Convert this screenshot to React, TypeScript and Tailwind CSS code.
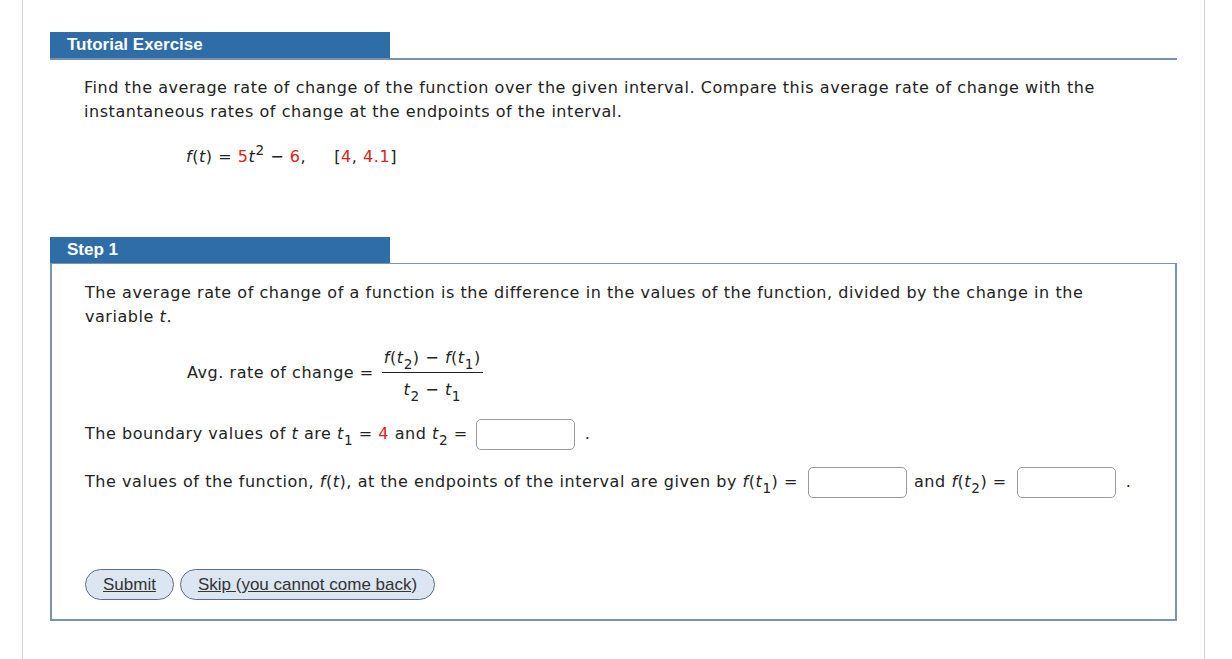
import React from 'react'

const red = 'text-[#e0201b]'

function Sub({ children }: { children: React.ReactNode }) {
  return <span className="text-[0.85em] relative top-[0.42em] leading-none">{children}</span>
}

function T({ children }: { children: React.ReactNode }) {
  return <i className="italic">{children}</i>
}

function Box() {
  return (
    <span className="inline-block align-middle w-[99px] h-[31px] border border-[#9a9a9a] rounded-[5px] bg-white mx-[2px]" />
  )
}

function Header({ title }: { title: string }) {
  return (
    <div className="w-[340px] h-[26px] bg-[#2f6da8] text-white font-bold text-[17px] tracking-normal pl-[17px] leading-[26px] font-['Liberation_Sans',Arial,sans-serif]">
      {title}
    </div>
  )
}

export default function App() {
  return (
    <div className="w-[1232px] h-[659px] bg-white overflow-hidden flex">
      <div className="ml-[22px] w-[1183px] border-x border-[#d4d4d4] flex flex-col pt-[32px] font-['DejaVu_Sans',Verdana,sans-serif] text-[16px] tracking-[0.55px] text-[#222]">
        <div className="ml-[27px] w-[1127px]">
          <Header title="Tutorial Exercise" />
          <div className="h-[2px] bg-[#7b90ab]" />
          <div className="pl-[34px] pr-[60px] pt-[16px] leading-[24px]">
            <p>
              Find the average rate of change of the function over the given interval. Compare this average rate of change with the
              instantaneous rates of change at the endpoints of the interval.
            </p>
            <p className="pl-[102px] mt-[21px]">
              <T>f</T>(<T>t</T>) = <span className={red}>5</span><T>t</T>
              <span className="text-[0.85em] relative -top-[0.5em] leading-none">2</span> − <span className={red}>6</span>,
              <span className="ml-[28px]">[</span>
              <span className={red}>4</span>, <span className={red}>4.1</span>]
            </p>
          </div>

          <div className="mt-[68px]">
            <Header title="Step 1" />
            <div className="h-[358px] border-2 border-t-[1.5px] border-[#7e93ad] pl-[33px] pt-[17px] leading-[24px]">
              <p className="pr-[60px]">
                The average rate of change of a function is the difference in the values of the function, divided by the change in the
                variable <T>t</T>.
              </p>
              <div className="pl-[102px] mt-[15px] flex items-center">
                <span>Avg. rate of change =</span>
                <span className="ml-[8px] inline-flex flex-col items-center">
                  <span className="px-[2px] pt-[3px] pb-[3px] leading-[22px]">
                    <T>f</T>(<T>t</T>
                    <Sub>2</Sub>) − <T>f</T>(<T>t</T>
                    <Sub>1</Sub>)
                  </span>
                  <span className="h-px w-full bg-[#222]" />
                  <span className="pt-[6px] leading-[22px]">
                    <T>t</T>
                    <Sub>2</Sub> − <T>t</T>
                    <Sub>1</Sub>
                  </span>
                </span>
              </div>
              <p className="mt-[17px] flex items-center h-[32px]">
                <span>
                  The boundary values of <T>t</T> are <T>t</T>
                  <Sub>1</Sub> = <span className={red}>4</span> and <T>t</T>
                  <Sub>2</Sub> =
                </span>
                <span className="ml-[6px]"><Box /></span>
                <span className="ml-[8px]">.</span>
              </p>
              <p className="mt-[16px] flex items-center h-[32px]">
                <span>
                  The values of the function, <T>f</T>(<T>t</T>), at the endpoints of the interval are given by <T>f</T>(<T>t</T>
                  <Sub>1</Sub>) =
                </span>
                <span className="ml-[8px]"><Box /></span>
                <span className="ml-[5px]">
                  and <T>f</T>(<T>t</T>
                  <Sub>2</Sub>) =
                </span>
                <span className="ml-[8px]"><Box /></span>
                <span className="ml-[8px]">.</span>
              </p>
              <div className="mt-[71px] flex gap-[6px] font-['Liberation_Sans',Arial,sans-serif] text-[17px] tracking-normal text-[#333]">
                <button className="h-[31px] px-[17px] rounded-full border border-[#5b6f8c] bg-[#dbe6f2] underline">Submit</button>
                <button className="h-[31px] px-[17px] rounded-full border border-[#5b6f8c] bg-[#dbe6f2] underline">Skip (you cannot come back)</button>
              </div>
            </div>
          </div>
        </div>
      </div>
    </div>
  )
}
